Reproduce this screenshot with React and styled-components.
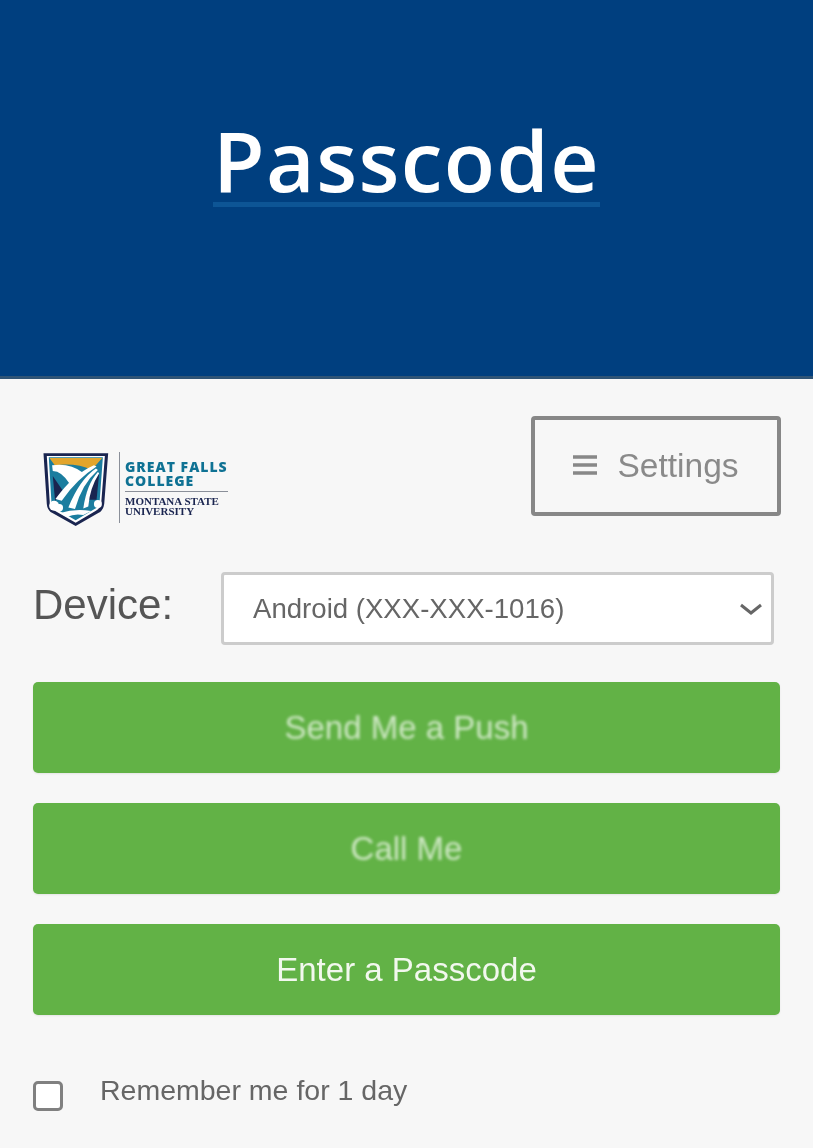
import React from 'react';
import styled, { createGlobalStyle } from 'styled-components';

const Global = createGlobalStyle`
  html, body { margin: 0; padding: 0; background: #f7f7f7; }
  body { font-family: "Liberation Sans", Arial, sans-serif; }
`

const Page = styled.div`
  width: 813px;
  height: 1148px;
  overflow: hidden;
  background: #f7f7f7;
`

const Header = styled.header`
  height: 379px;
  box-sizing: border-box;
  padding-top: 117px;
  background: #003f7f;
  border-bottom: 3px solid #2f5476;
  display: flex;
  justify-content: center;
  align-items: flex-start;
`

const Title = styled.h1`
  margin: 0;
  font-family: "Open Sans", "Noto Sans", sans-serif;
  font-weight: 600;
  font-size: 84px;
  line-height: 85px;
  letter-spacing: 1.4px;
  color: #fff;
  border-bottom: 5px solid #0d5595;
  filter: blur(0.7px);
`

const Main = styled.main`
  padding: 37px 33px 0;
`

const TopRow = styled.div`
  display: flex;
  justify-content: space-between;
  align-items: flex-start;
`

const Logo = styled.div`
  display: flex;
  align-items: flex-start;
  margin: 36px 0 0 9px;
  filter: blur(0.5px);
`

const LogoRule = styled.div`
  width: 1px;
  height: 71px;
  margin: 0 5px 0 9px;
  background: #8a8f99;
`

const LogoText = styled.div`
  display: flex;
  flex-direction: column;
  padding-top: 8px;
`

const LogoName = styled.div`
  font-family: "Open Sans", sans-serif;
  font-weight: 800;
  font-size: 14px;
  line-height: 14px;
  letter-spacing: 1px;
  color: #0f7294;
  border-bottom: 1px solid #8a8f99;
  padding-bottom: 3px;
  margin-bottom: 4px;
`

const LogoSub = styled.div`
  font-family: "Liberation Serif", serif;
  font-weight: 700;
  font-size: 11px;
  line-height: 10px;
  color: #1a2550;
`

const SettingsButton = styled.button`
  width: 250px;
  height: 100px;
  box-sizing: border-box;
  margin: 0 -1px 0 0;
  display: flex;
  align-items: center;
  justify-content: center;
  gap: 20px;
  background: transparent;
  border: 4px solid #878787;
  border-radius: 4px;
  color: #8a8a8a;
  font-family: "Liberation Sans", sans-serif;
  font-size: 33.5px;
  padding: 0;
  filter: blur(0.7px);
`

const DeviceRow = styled.div`
  display: flex;
  align-items: center;
  margin-top: 45px;
`

const DeviceLabel = styled.label`
  width: 188px;
  font-size: 42px;
  color: #555;
  filter: blur(0.6px);
  position: relative;
  top: -4px;
`

const DeviceSelect = styled.div`
  width: 553px;
  height: 73px;
  box-sizing: border-box;
  display: flex;
  align-items: center;
  justify-content: space-between;
  padding: 0 8px 0 29px;
  background: #fff;
  border: 3px solid #ccc;
  border-radius: 4px;
  font-size: 27.6px;
  color: #666;
`

const SelectText = styled.span`
  filter: blur(0.7px);
`

const Actions = styled.div`
  display: flex;
  flex-direction: column;
  gap: 30px;
  margin-top: 37px;
`

const ActionButton = styled.button`
  height: 91px;
  width: 100%;
  border: 0;
  border-radius: 5px;
  background: #62b246;
  color: ${p => (p.$dim ? '#cfe8c5' : '#f2f8ee')};
  font-family: "Liberation Sans", sans-serif;
  font-size: 33px;
  padding: 0;
  box-shadow: 0 1px 2px rgba(0, 0, 0, 0.08);
`

const ButtonLabel = styled.span`
  display: block;
  filter: blur(${p => (p.$dim ? '1.6px' : '0.6px')});
`

const RememberRow = styled.label`
  display: flex;
  align-items: flex-start;
  gap: 37px;
  margin-top: 66px;
`

const Check = styled.span`
  width: 30px;
  height: 30px;
  box-sizing: border-box;
  display: block;
  background: #fff;
  border: 3px solid #808080;
  border-radius: 5px;
`

const RememberText = styled.span`
  font-size: 28.5px;
  line-height: 30px;
  margin-top: -6px;
  color: #666;
  filter: blur(0.7px);
`

function Shield() {
  return (
    <svg width="68" height="75" viewBox="66 68 204 226" aria-hidden="true">
      <path d="M70 72 H265 L253 225 Q250 245 235 252 L167 291 L97 252 Q82 245 80 225 Z" fill="#1a2550" />
      <path d="M80 80 H255 L244 222 Q241 238 228 245 L167 281 L104 245 Q91 238 89 222 Z" fill="#fff" />
      <path d="M86 84 H249 L239 220 Q236 234 224 240 L167 274 L108 240 Q97 234 94 220 Z" fill="#1b7d9f" />
      <path d="M88 86 H247 L215 122 Q170 100 104 108 Z" fill="#e2a52c" />
      <path d="M96 108 Q150 100 188 130 L150 165 Q125 125 98 125 Z" fill="#fff" />
      <path d="M98 140 L132 190 L105 215 Z" fill="#1a2550" />
      <path d="M238 130 L230 212 L195 212 Q205 165 238 130 Z" fill="#1a2550" />
      <path d="M222 108 Q160 135 106 210 L125 215 Q170 150 230 112 Z" fill="#fff" />
      <path d="M228 118 Q180 150 145 235 L165 240 Q185 165 234 122 Z" fill="#fff" />
      <path d="M234 128 Q200 165 190 238 L205 232 Q210 175 238 132 Z" fill="#fff" />
      <circle cx="102" cy="230" r="15" fill="#fff" />
      <circle cx="118" cy="236" r="11" fill="#fff" />
      <circle cx="234" cy="225" r="12" fill="#fff" />
      <path d="M120 252 Q165 238 214 246 L190 258 Q165 252 140 264 Z" fill="#fff" />
    </svg>
  )
}

function MenuIcon() {
  return (
    <svg width="24" height="22" viewBox="0 0 24 22" aria-hidden="true">
      <path d="M0 2 H24 M0 10 H24 M0 18 H24" stroke="#888" strokeWidth="3.5" />
    </svg>
  )
}

function Chevron() {
  return (
    <svg width="24" height="14" viewBox="0 0 24 14" aria-hidden="true">
      <path d="M2 3 L12 11 L22 3" fill="none" stroke="#666" strokeWidth="3" />
    </svg>
  )
}

export default function App() {
  return (
    <Page>
      <Global />
      <Header>
        <Title>Passcode</Title>
      </Header>
      <Main>
        <TopRow>
          <Logo>
            <Shield />
            <LogoRule />
            <LogoText>
              <LogoName>GREAT FALLS<br />COLLEGE</LogoName>
              <LogoSub>MONTANA STATE<br />UNIVERSITY</LogoSub>
            </LogoText>
          </Logo>
          <SettingsButton>
            <MenuIcon />
            <span>Settings</span>
          </SettingsButton>
        </TopRow>
        <DeviceRow>
          <DeviceLabel>Device:</DeviceLabel>
          <DeviceSelect>
            <SelectText>Android (XXX-XXX-1016)</SelectText>
            <Chevron />
          </DeviceSelect>
        </DeviceRow>
        <Actions>
          <ActionButton $dim><ButtonLabel $dim>Send Me a Push</ButtonLabel></ActionButton>
          <ActionButton $dim><ButtonLabel $dim>Call Me</ButtonLabel></ActionButton>
          <ActionButton><ButtonLabel>Enter a Passcode</ButtonLabel></ActionButton>
        </Actions>
        <RememberRow>
          <Check />
          <RememberText>Remember me for 1 day</RememberText>
        </RememberRow>
      </Main>
    </Page>
  );
}
